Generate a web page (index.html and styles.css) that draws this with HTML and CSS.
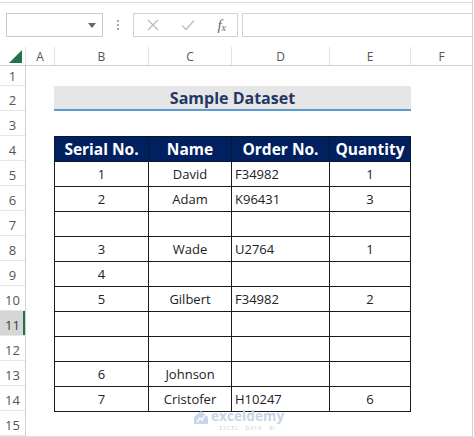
FILE: index.html
```html
<!DOCTYPE html>
<html>
<head>
<meta charset="utf-8">
<link rel="stylesheet" href="styles.css">
</head>
<body>
<div class="app">
  <div class="topbar">
    <div class="namebox">
      <svg class="caret" width="8" height="5" viewBox="0 0 8 5"><path d="M0 0H8L4 5Z" fill="#666"/></svg>
    </div>
    <div class="dots"><i></i><i></i><i></i></div>
    <div class="fbtns">
      <svg width="12" height="12" viewBox="0 0 12 12"><path d="M1 1L11 11M11 1L1 11" stroke="#bdbdbd" stroke-width="1.3" fill="none"/></svg>
      <svg width="14" height="12" viewBox="0 0 14 12"><path d="M1 6.5L5 10.5L13 1.5" stroke="#bdbdbd" stroke-width="1.3" fill="none"/></svg>
      <span class="fx"><i>f</i><sub>x</sub></span>
    </div>
    <div class="finput"></div>
  </div>
  <div class="colheads">
    <div class="corner"><svg width="13" height="13" viewBox="0 0 13 13"><path d="M13 0V13H0Z" fill="#217346"/></svg></div>
    <div class="ch ca">A</div>
    <div class="ch cb">B</div>
    <div class="ch cc">C</div>
    <div class="ch cd">D</div>
    <div class="ch ce">E</div>
    <div class="ch cf">F</div>
  </div>
  <div class="sheetbody">
    <div class="rowheads">
      <div class="rh short">1</div>
      <div class="rh">2</div>
      <div class="rh">3</div>
      <div class="rh">4</div>
      <div class="rh">5</div>
      <div class="rh">6</div>
      <div class="rh">7</div>
      <div class="rh">8</div>
      <div class="rh">9</div>
      <div class="rh">10</div>
      <div class="rh sel">11</div>
      <div class="rh">12</div>
      <div class="rh">13</div>
      <div class="rh">14</div>
      <div class="rh">15</div>
    </div>
    <div class="cells">
      <div class="gap1"></div>
      <div class="title">Sample Dataset</div>
      <div class="gap3"></div>
      <table class="data">
        <thead>
          <tr><th class="wb">Serial No.</th><th class="wc">Name</th><th class="wd">Order No.</th><th class="we">Quantity</th></tr>
        </thead>
        <tbody>
          <tr><td>1</td><td>David</td><td class="l">F34982</td><td>1</td></tr>
          <tr><td>2</td><td>Adam</td><td class="l">K96431</td><td>3</td></tr>
          <tr><td></td><td></td><td class="l"></td><td></td></tr>
          <tr><td>3</td><td>Wade</td><td class="l">U2764</td><td>1</td></tr>
          <tr><td>4</td><td></td><td class="l"></td><td></td></tr>
          <tr><td>5</td><td>Gilbert</td><td class="l">F34982</td><td>2</td></tr>
          <tr><td></td><td></td><td class="l"></td><td></td></tr>
          <tr><td></td><td></td><td class="l"></td><td></td></tr>
          <tr><td>6</td><td>Johnson</td><td class="l"></td><td></td></tr>
          <tr><td>7</td><td>Cristofer</td><td class="l">H10247</td><td>6</td></tr>
        </tbody>
      </table>
    </div>
  </div>
  <div class="watermark">
    <svg width="16" height="15" viewBox="0 0 16 15"><path d="M8 1L15 7V14H1V7Z" fill="#c9d5ea"/><path d="M4 12L7 8L9 10L12 5" stroke="#fff" stroke-width="1.4" fill="none"/></svg>
    <div class="wmtext">
      <span class="wmname">exceldemy</span>
      <span class="wmsub">EXCEL · DATA · BI</span>
    </div>
  </div>
</div>
</body>
</html>
```
FILE: styles.css
```css
* { box-sizing: border-box; }
html, body { margin: 0; padding: 0; background: #fff; }
body { width: 474px; height: 437px; overflow: hidden; font-family: "Lato", "Open Sans", sans-serif; }
.app {
  position: relative;
  width: 473px;
  height: 437px;
  border-right: 1px solid #cfcfcf;
  display: flex;
  flex-direction: column;
  overflow: hidden;
}
.topbar {
  height: 48px;
  flex: none;
  border-top: 1px solid #dcdcdc;
  margin-top: 2px;
  display: flex;
  align-items: flex-start;
  padding-top: 10px;
  padding-left: 6px;
  background: #fff;
}
.namebox {
  width: 97px;
  height: 24px;
  border: 1px solid #cacaca;
  position: relative;
}
.caret { position: absolute; right: 6px; top: 9px; }
.dots {
  width: 30px;
  height: 24px;
  display: flex;
  flex-direction: column;
  align-items: center;
  justify-content: center;
  gap: 2px;
}
.dots i { display: block; width: 2px; height: 2px; background: #a8a8a8; }
.fbtns {
  width: 105px;
  height: 24px;
  border: 1px solid #d2d2d2;
  display: flex;
  align-items: center;
  justify-content: space-between;
  padding: 0 11px 0 13px;
}
.fx { font-family: "Liberation Serif", serif; color: #6a6a6a; font-size: 15px; line-height: 1; }
.fx i { font-style: italic; }
.fx sub { font-size: 10px; font-style: italic; vertical-align: -1px; }
.finput {
  margin-left: 4px;
  flex: 1;
  height: 24px;
  border: 1px solid #d2d2d2;
  border-right: none;
}
.colheads {
  display: flex;
  flex: none;
  height: 19px;
  border-bottom: 1px solid #d0d0d0;
  margin-top: -3px;
  font-family: "Open Sans", sans-serif;
}
.corner {
  width: 26px;
  border-right: 1px solid #e2e2e2;
  display: flex;
  align-items: flex-end;
  justify-content: flex-end;
  padding: 0 3px 2px 0;
}
.ch {
  border-right: 1px solid #e2e2e2;
  text-align: center;
  font-size: 12px;
  line-height: 19px;
  color: #555;
}
.ca { width: 29px; }
.cb { width: 94px; }
.cc { width: 83px; }
.cd { width: 98px; }
.ce { width: 81px; }
.cf { flex: 1; border-right: none; }
.sheetbody { display: flex; flex: 1; border-bottom: 2px solid #dedede; }
.rowheads {
  width: 26px;
  border-right: 1px solid #d0d0d0;
  display: flex;
  flex-direction: column;
  font-family: "Open Sans", sans-serif;
}
.rh {
  flex: none;
  height: 25px;
  border-bottom: 1px solid #e6e6e6;
  text-align: center;
  font-size: 13px;
  line-height: 21px;
  padding-top: 4px;
  color: #555;
}
.rh.short { height: 20px; line-height: 19px; padding-top: 1px; }
.rh.sel { background: #d6d6d6; color: #3a3a3a; box-shadow: inset -2px 0 0 #217346; }
.cells { flex: 1; padding-left: 28px; }
.gap1 { height: 20px; }
.title {
  width: 357px;
  height: 25px;
  background: #e7e6e6;
  border-bottom: 2px solid #5b9bd5;
  text-align: center;
  color: #1f3864;
  font-weight: 700;
  font-size: 16px;
  line-height: 25px;
  font-family: "Open Sans", sans-serif;
}
.gap3 { height: 25px; }
.data {
  border-collapse: collapse;
  table-layout: fixed;
  font-family: "Open Sans", sans-serif;
}
.data th, .data td {
  box-sizing: content-box;
  border: 1px solid #1a1a1a;
  height: 24px;
  line-height: 24px;
  padding: 0;
  text-align: center;
  vertical-align: middle;
  overflow: hidden;
  white-space: nowrap;
}
.data th {
  background: #002060;
  color: #fff;
  font-size: 15.5px;
  font-weight: 700;
  border-color: #0b1530;
}
.data td { font-size: 13px; color: #222; }
.data td.l { text-align: left; padding-left: 3px; }
.wb { width: 93px; }
.wc { width: 82px; }
.wd { width: 97px; }
.we { width: 80px; }
.watermark {
  position: absolute;
  left: 193px;
  top: 410px;
  display: flex;
  align-items: flex-start;
  gap: 2px;
}
.wmtext { display: flex; flex-direction: column; align-items: center; }
.wmname { font-family: "Open Sans", sans-serif; font-weight: 700; font-size: 13.5px; line-height: 13px; color: #c8d3e8; letter-spacing: 0.1px; }
.wmsub { font-family: "Open Sans", sans-serif; font-size: 5px; line-height: 6px; margin-top: 2px; color: #c8d0dc; letter-spacing: 1px; }
```
